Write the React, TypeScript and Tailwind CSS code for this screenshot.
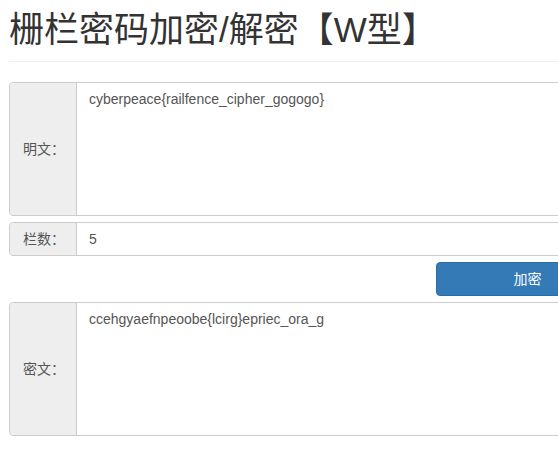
import { useState } from 'react'

const cjk = "font-['Liberation_Sans','Noto_Sans_CJK_SC',sans-serif]"

function Field({ label, value, tall }: { label: string; value: string; tall?: boolean }) {
  return (
    <div
      className={`flex border border-[#ccc] rounded-[4px] ${tall ? 'h-[134px]' : 'h-[34px]'}`}
    >
      <div className="w-[67px] shrink-0 flex items-center pl-[13px] bg-[#eee] border-r border-[#ccc] rounded-l-[4px] text-[14px] text-[#555]">
        {label}
      </div>
      <div
        className={`flex-1 px-[12px] bg-white text-[14px] leading-[20px] text-[#555] ${
          tall ? 'pt-[6px]' : 'flex items-center'
        }`}
      >
        {value}
      </div>
    </div>
  )
}

export default function App() {
  const [plain] = useState('cyberpeace{railfence_cipher_gogogo}')
  const [rails] = useState('5')
  const [cipher] = useState('ccehgyaefnpeoobe{lcirg}epriec_ora_g')

  return (
    <div className={`w-[558px] h-[452px] overflow-hidden bg-white ${cjk}`}>
      <div className="ml-[9px] w-[610px]">
        {/* Page header */}
        <h1 className="pt-[10px] pb-[11px] mb-[20px] border-b border-[#eee] text-[35px] leading-[40px] font-normal text-[#333] whitespace-nowrap">
          栅栏密码加密/解密【W型】
        </h1>

        <div className="flex flex-col gap-[6px]">
          <Field label="明文：" value={plain} tall />
          <Field label="栏数：" value={rails} />
          <div className="flex justify-end">
            <button className="w-[183px] h-[34px] rounded-[4px] bg-[#337ab7] border border-[#2e6da4] text-white text-[14px]">
              加密
            </button>
          </div>
          <Field label="密文：" value={cipher} tall />
        </div>
      </div>
    </div>
  )
}
